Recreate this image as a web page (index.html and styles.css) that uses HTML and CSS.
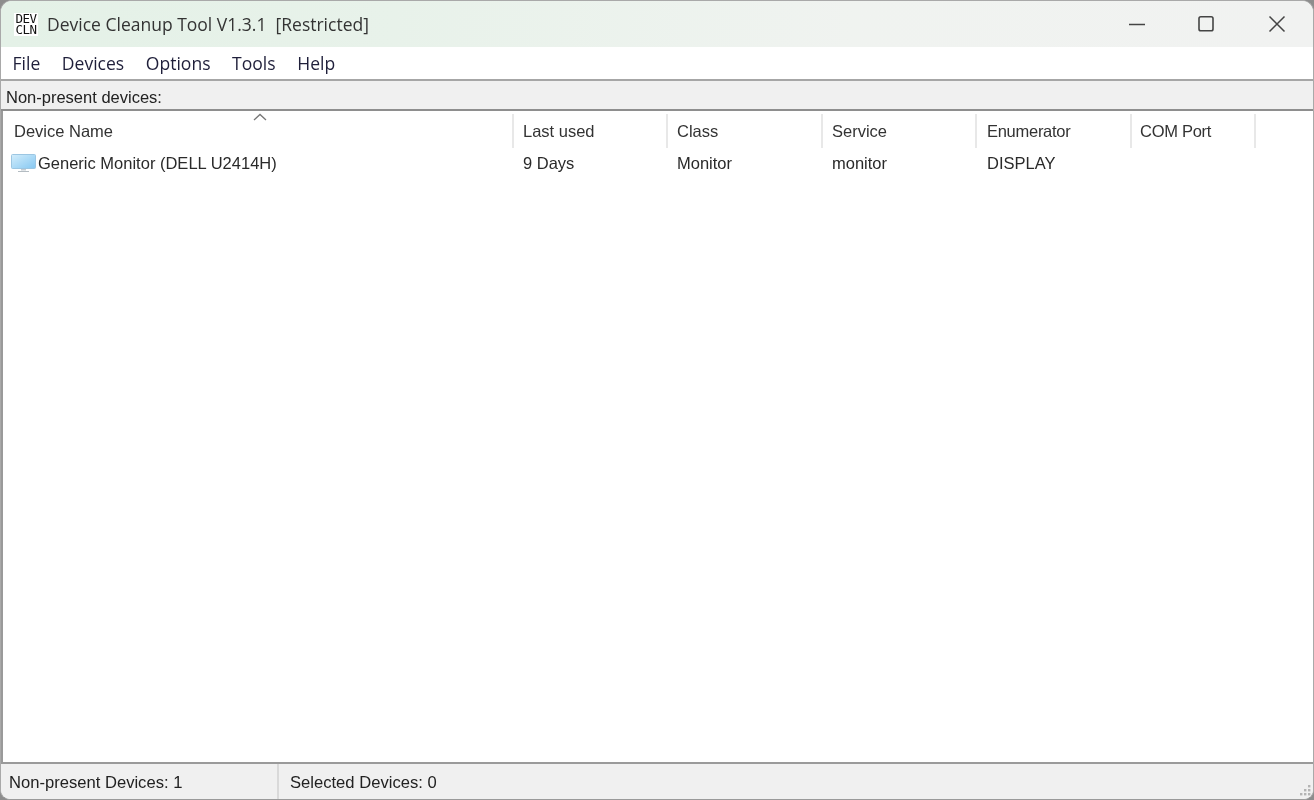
FILE: index.html
```html
<!DOCTYPE html>
<html lang="en">
<head>
<meta charset="utf-8">
<title>Device Cleanup Tool V1.3.1 [Restricted]</title>
<link rel="stylesheet" href="styles.css">
</head>
<body>
<div class="window">
  <header class="titlebar">
    <div class="app-icon"><span>DEV</span><span>CLN</span></div>
    <div class="title">Device Cleanup Tool V1.3.1&nbsp; [Restricted]</div>
    <div class="controls">
      <svg class="ctl ctl-min" width="18" height="18" viewBox="0 0 18 18"><path d="M1 9.5h16" stroke="#444" stroke-width="1.6" fill="none"/></svg>
      <svg class="ctl ctl-max" width="18" height="18" viewBox="0 0 18 18"><rect x="2" y="1.8" width="14" height="14" rx="1.8" stroke="#444" stroke-width="1.6" fill="none"/></svg>
      <svg class="ctl ctl-close" width="18" height="18" viewBox="0 0 18 18"><path d="M1.5 1.5l15 15M16.5 1.5l-15 15" stroke="#444" stroke-width="1.5" fill="none"/></svg>
    </div>
  </header>
  <nav class="menubar">
    <span class="menu-item">File</span>
    <span class="menu-item">Devices</span>
    <span class="menu-item">Options</span>
    <span class="menu-item">Tools</span>
    <span class="menu-item">Help</span>
  </nav>
  <div class="label-bar">Non-present devices:</div>
  <main class="list">
    <div class="row head-row">
      <div class="cell c-name head">Device Name
        <svg class="sort" width="14" height="8" viewBox="0 0 14 8"><path d="M1 7l6-5.5L13 7" stroke="#777" stroke-width="1.3" fill="none"/></svg>
      </div>
      <div class="cell c-used head">Last used</div>
      <div class="cell c-class head">Class</div>
      <div class="cell c-service head">Service</div>
      <div class="cell c-enum head tight">Enumerator</div>
      <div class="cell c-com head tight">COM Port</div>
    </div>
    <div class="row data-row">
      <div class="cell c-name name-cell">
        <svg class="monitor" width="25" height="19" viewBox="0 0 25 19">
          <defs><linearGradient id="scr" x1="0" y1="0" x2="1" y2="1"><stop offset="0" stop-color="#d3edfb"/><stop offset="1" stop-color="#86c8f2"/></linearGradient></defs>
          <rect x="0.5" y="0.5" width="24" height="14" rx="1" fill="url(#scr)" stroke="#9cc6e2"/>
          <path d="M10 15h5v1.5h-5z" fill="#c4ccd2"/>
          <path d="M7 17h11v1H7z" fill="#b4bcc2"/>
        </svg>
        <span>Generic Monitor (DELL U2414H)</span>
      </div>
      <div class="cell c-used">9 Days</div>
      <div class="cell c-class">Monitor</div>
      <div class="cell c-service">monitor</div>
      <div class="cell c-enum">DISPLAY</div>
      <div class="cell c-com"></div>
    </div>
  </main>
  <footer class="statusbar">
    <div class="status-a">Non-present Devices: 1</div>
    <div class="status-b">Selected Devices: 0</div>
    <svg class="grip" width="16" height="16" viewBox="0 0 16 16" fill="#b4b4b4">
      <rect x="12" y="3" width="2.4" height="2.4"/>
      <rect x="8" y="7" width="2.4" height="2.4"/><rect x="12" y="7" width="2.4" height="2.4"/>
      <rect x="4" y="11" width="2.4" height="2.4"/><rect x="8" y="11" width="2.4" height="2.4"/><rect x="12" y="11" width="2.4" height="2.4"/>
    </svg>
  </footer>
</div>
</body>
</html>
```
FILE: styles.css
```css
* { box-sizing: border-box; }
html, body { margin: 0; height: 100%; background: #8d8d8d; overflow: hidden; }
body { font-family: "Liberation Sans", Arial, sans-serif; font-size: 16.5px; color: #222; }

.window {
  width: 1314px; height: 800px;
  display: flex; flex-direction: column;
  border: 1px solid #a9a9a9; border-bottom-color: #9a9a9a;
  border-radius: 12px 12px 10px 10px;
  overflow: hidden;
  background: #f0f0f0;
  filter: blur(0.4px);
}

.titlebar {
  height: 46px; flex: none;
  display: flex; align-items: center;
  padding-left: 13px;
  background: linear-gradient(90deg, #e4f1e7 0, #e8f2ea 30%, #f0f3f0 65%, #f1f2f1 100%);
  font-family: "Open Sans", "Noto Sans", sans-serif;
}
.app-icon {
  width: 24px; display: flex; flex-direction: column;
  font-family: "DejaVu Sans Mono", "Liberation Mono", monospace;
  font-size: 12.5px; line-height: 11.5px; font-weight: 400;
  letter-spacing: -0.5px; color: #111; text-align: center;
  background: #fff;
}
.title { margin-left: 9px; font-size: 17.5px; color: #333; white-space: nowrap; }
.controls { margin-left: auto; display: flex; align-items: center; padding-right: 27px; padding-bottom: 1px; }
.ctl { display: block; }
.ctl-min { margin-right: 51px; }
.ctl-max { margin-right: 53px; }

.menubar {
  height: 32px; flex: none;
  display: flex; align-items: center; gap: 21.6px;
  padding-left: 11.5px;
  background: #fff;
  font-family: "Open Sans", "Noto Sans", sans-serif;
  font-size: 17.55px;
  color: #1f1f3a;
  padding-bottom: 1px;
}

.label-bar {
  height: 32px; flex: none;
  display: flex; align-items: center;
  padding-left: 5px; padding-top: 5px;
  background: #f0f0f0;
  border-top: 2px solid #a6a6a6;
  border-bottom: 2px solid #8e8e8e;
}

.list {
  flex: 1; min-height: 0;
  background: #fff;
  border-left: 2px solid #9a9a9a;
}
.row { display: flex; }
.head-row { height: 37px; padding-top: 3px; }
.data-row { height: 31px; }
.cell { display: flex; align-items: center; flex: none; position: relative; white-space: nowrap; color: #2a2a2a; }
.head { border-right: 2px solid #e8e8e8; padding-left: 9px; color: #333; }
.head.c-name { padding-left: 11px; }
.tight { letter-spacing: -0.28px; }
.c-name { width: 511px; }
.c-used { width: 154px; padding-left: 9px; }
.c-class { width: 155px; padding-left: 9px; }
.c-service { width: 154px; padding-left: 9px; }
.c-enum { width: 155px; padding-left: 10px; }
.c-com { width: 124px; padding-left: 8px; }
.sort { position: absolute; left: 250px; top: -1px; }
.name-cell { padding-left: 8px; gap: 2px; }
.monitor { flex: none; }

.statusbar {
  height: 37px; flex: none;
  display: flex; align-items: center;
  position: relative;
  background: #f0f0f0;
  border-top: 2px solid #9a9a9a;
  font-size: 16.6px;
}
.status-a { width: 278px; height: 100%; display: flex; align-items: center; padding: 3px 0 0 8px; border-right: 2px solid #d9d9d9; }
.status-b { padding: 3px 0 0 11px; }
.grip { position: absolute; right: 1px; bottom: 1px; }
```
